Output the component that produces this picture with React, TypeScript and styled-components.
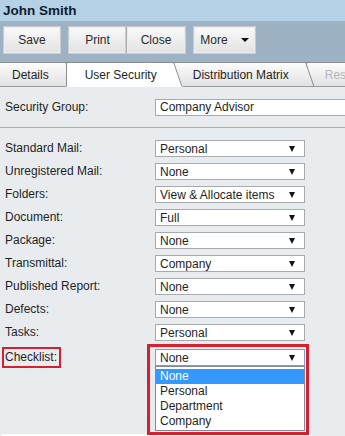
import styled, { createGlobalStyle } from "styled-components";

const GlobalStyle = createGlobalStyle`
  html, body {
    margin: 0;
    padding: 0;
    overflow: hidden;
    background: #e9ecef;
  }
  body {
    font-family: "Liberation Sans", Arial, sans-serif;
    font-size: 12px;
    color: #1f1f1f;
  }
`;

const Page = styled.div`
  width: 345px;
  height: 436px;
  overflow: hidden;
  background: #e9ecef;
`;

const TitleBar = styled.div`
  height: 21px;
  padding-left: 3px;
  display: flex;
  align-items: center;
  background: #b4d1e6;
  color: #0e1d2e;
  font-size: 13.5px;
  font-weight: bold;
`;

const Toolbar = styled.div`
  background: #9db2c4;
  padding-top: 6px;
`;

const ButtonRow = styled.div`
  display: flex;
  gap: 9px;
  height: 26px;
  padding-left: 4px;
`;

const ButtonGroup = styled.div`
  display: flex;
  box-shadow: 0 0 0 1px #c9cdd2;
`;

const ToolButton = styled.button<{ $w: number; $divider?: boolean }>`
  box-sizing: border-box;
  width: ${({ $w }) => $w}px;
  height: 26px;
  display: flex;
  align-items: center;
  justify-content: center;
  gap: 13px;
  padding: 0;
  border: none;
  border-left: ${({ $divider }) => ($divider ? "1px solid #a9adb1" : "none")};
  background: linear-gradient(#fafafa, #e2e2e2);
  box-shadow: inset 0 0 0 1px #ececec;
  outline: 1px solid #c9cdd2;
  font-family: "Liberation Sans", Arial, sans-serif;
  font-size: 12px;
  color: #2a2a2a;
`;

const Caret = styled.span`
  width: 0;
  height: 0;
  border-left: 4px solid transparent;
  border-right: 4px solid transparent;
  border-top: 4px solid #111;
`;

const TabStrip = styled.div`
  display: flex;
  height: 25px;
  margin-top: 9px;
  margin-left: -1px;
`;

const Tab = styled.div<{ $active?: boolean; $disabled?: boolean; $z: number; $padL?: number }>`
  position: relative;
  z-index: ${({ $active, $z }) => ($active ? 10 : $z)};
  box-sizing: border-box;
  height: 25px;
  padding: 0 17px 0 ${({ $padL }) => $padL ?? 18}px;
  display: flex;
  align-items: center;
  white-space: nowrap;
  color: ${({ $disabled }) => ($disabled ? "#b8b8b8" : "#1f1f1f")};
  background: ${({ $active }) => ($active ? "#ffffff" : "linear-gradient(#fdfdfd, #e1e1e1)")};
  border-top: 1px solid #8d8d8d;
  border-left: 1px solid #8d8d8d;
  border-bottom: 1px solid ${({ $active }) => ($active ? "#ffffff" : "#9c9c9c")};

  &::after {
    content: "";
    position: absolute;
    z-index: -1;
    top: -1px;
    bottom: -1px;
    right: 0;
    width: 22px;
    background: inherit;
    border-top: 1px solid #8d8d8d;
    border-right: 1px solid #8d8d8d;
    border-bottom: 1px solid ${({ $active }) => ($active ? "#ffffff" : "#9c9c9c")};
    transform: skewX(19deg);
    transform-origin: top;
  }
`;

const Content = styled.div`
  padding: 12px 0 0 5px;
`;

const Row = styled.div`
  display: grid;
  grid-template-columns: 150px 150px;
  align-items: center;
  height: 17px;
`;

const Rows = styled.div`
  display: flex;
  flex-direction: column;
  gap: 6px;
`;

const Label = styled.span<{ $highlight?: boolean }>`
  justify-self: start;
  line-height: 17px;
  white-space: nowrap;
  ${({ $highlight }) =>
    $highlight
      ? `border: 2px solid #d4202f; padding: 0 2px 0 1px; margin-left: -3px;`
      : ""}
`;

const TextBox = styled.div`
  box-sizing: border-box;
  width: 200px;
  height: 17px;
  line-height: 15px;
  padding-left: 4px;
  background: #fff;
  border: 1px solid #a8abae;
  white-space: nowrap;
`;

const Rule = styled.div`
  height: 1px;
  margin: 11px 0 12px -5px;
  background: #a9acaf;
`;

const SelectCell = styled.div`
  position: relative;
  height: 17px;
`;

const Select = styled.div<{ $focused?: boolean }>`
  box-sizing: border-box;
  height: 17px;
  display: flex;
  align-items: center;
  justify-content: space-between;
  padding: 0 9px 0 4px;
  background: #fff;
  border: 1px solid ${({ $focused }) => ($focused ? "#7d9fcb" : "#a8abae")};
  white-space: nowrap;
`;

const Arrow = styled.span`
  width: 0;
  height: 0;
  border-left: 3px solid transparent;
  border-right: 3px solid transparent;
  border-top: 6px solid #151515;
`;

const OptionList = styled.div`
  position: absolute;
  top: 17px;
  left: 0;
  width: 150px;
  box-sizing: border-box;
  padding: 2px 0 1px;
  background: #fff;
  border: 1px solid #808a96;
  z-index: 2;
`;

const Option = styled.div<{ $selected?: boolean }>`
  height: 15px;
  line-height: 15px;
  padding-left: 4px;
  background: ${({ $selected }) => ($selected ? "#3399ff" : "transparent")};
  color: ${({ $selected }) => ($selected ? "#ffffff" : "#1f1f1f")};
`;

const Annotation = styled.div`
  position: absolute;
  top: -5px;
  left: -8px;
  right: -4px;
  height: 91px;
  box-sizing: border-box;
  border: 3px solid #d4202f;
  z-index: 3;
  pointer-events: none;
`;

const FooterPanel = styled.div`
  width: 310px;
  height: 20px;
  margin: 70px 0 0 -3px;
  background: #ffffff;
`;

const permissions: [string, string][] = [
  ["Standard Mail:", "Personal"],
  ["Unregistered Mail:", "None"],
  ["Folders:", "View & Allocate items"],
  ["Document:", "Full"],
  ["Package:", "None"],
  ["Transmittal:", "Company"],
  ["Published Report:", "None"],
  ["Defects:", "None"],
  ["Tasks:", "Personal"],
];

const checklistOptions = ["None", "Personal", "Department", "Company"];

export default function App() {
  return (
    <Page>
      <GlobalStyle />
      <TitleBar>John Smith</TitleBar>
      <Toolbar>
        <ButtonRow>
          <ButtonGroup>
            <ToolButton $w={56}>Save</ToolButton>
          </ButtonGroup>
          <ButtonGroup>
            <ToolButton $w={57}>Print</ToolButton>
            <ToolButton $w={59} $divider>
              Close
            </ToolButton>
          </ButtonGroup>
          <ButtonGroup>
            <ToolButton $w={61}>
              More <Caret />
            </ToolButton>
          </ButtonGroup>
        </ButtonRow>
        <TabStrip>
          <Tab $z={4} $padL={12}>Details</Tab>
          <Tab $z={5} $active>User Security</Tab>
          <Tab $z={3}>Distribution Matrix</Tab>
          <Tab $z={2} $disabled>Resources</Tab>
        </TabStrip>
      </Toolbar>
      <Content>
        <Row>
          <Label>Security Group:</Label>
          <TextBox>Company Advisor</TextBox>
        </Row>
        <Rule />
        <Rows>
          {permissions.map(([label, value]) => (
            <Row key={label}>
              <Label>{label}</Label>
              <SelectCell>
                <Select>
                  <span>{value}</span>
                  <Arrow />
                </Select>
              </SelectCell>
            </Row>
          ))}
          <Row>
            <Label $highlight>Checklist:</Label>
            <SelectCell>
              <Select $focused>
                <span>None</span>
                <Arrow />
              </Select>
              <OptionList>
                {checklistOptions.map((o) => (
                  <Option key={o} $selected={o === "None"}>
                    {o}
                  </Option>
                ))}
              </OptionList>
              <Annotation />
            </SelectCell>
          </Row>
        </Rows>
        <FooterPanel />
      </Content>
    </Page>
  );
}
